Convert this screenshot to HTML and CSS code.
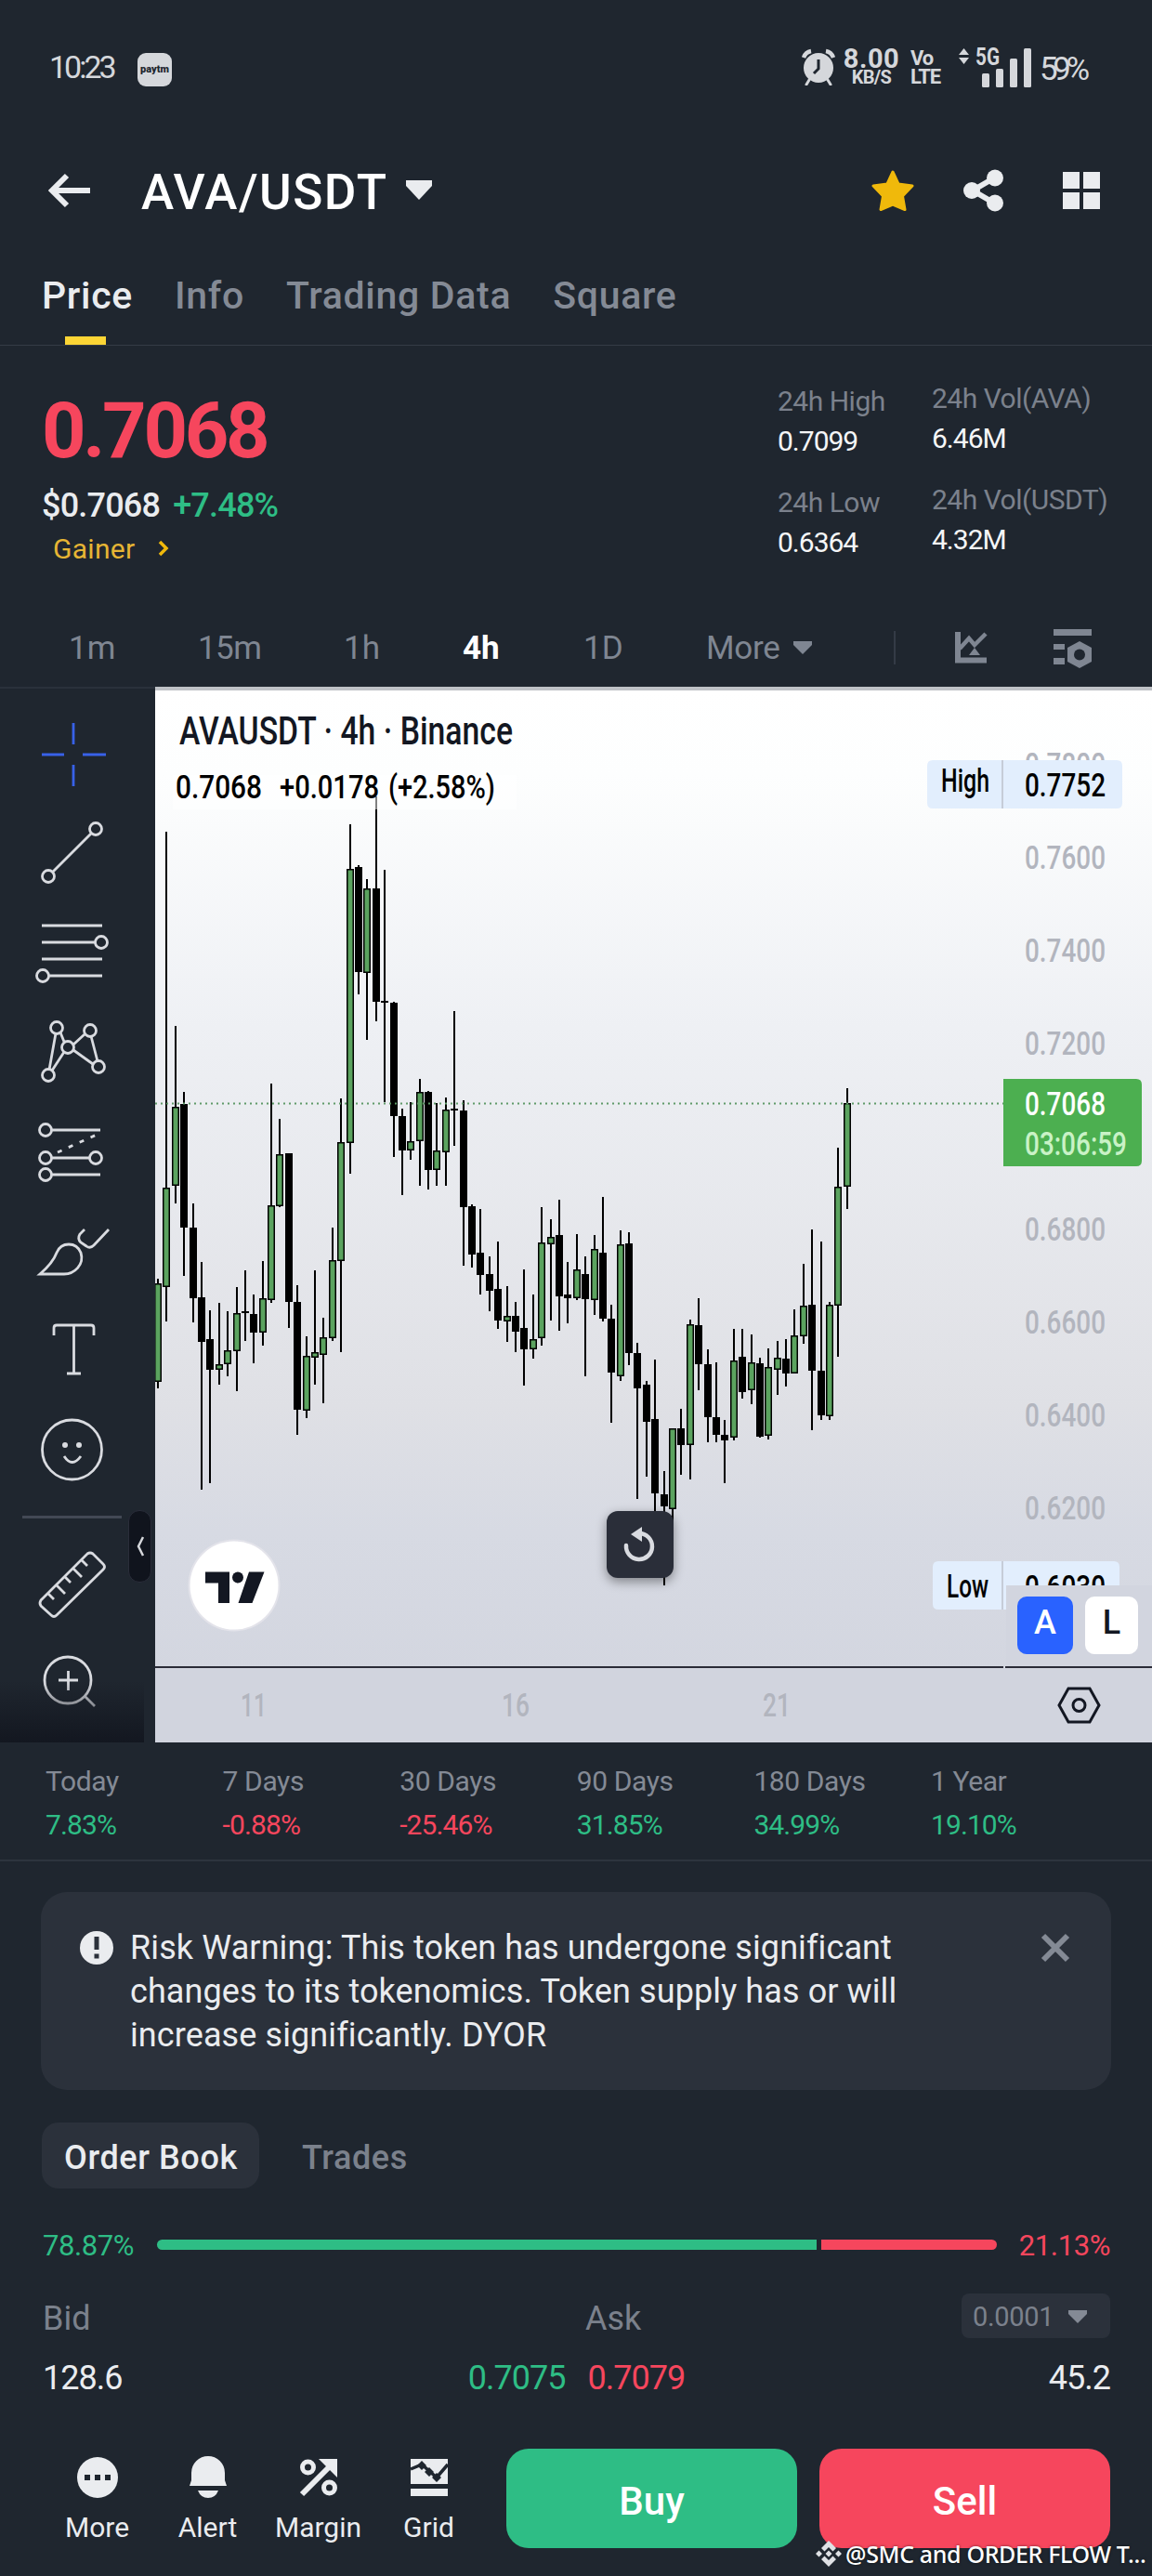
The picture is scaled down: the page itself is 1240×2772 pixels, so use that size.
FILE: index.html
```html
<!DOCTYPE html>
<html lang="en">
<head>
    <meta charset="UTF-8">
    <meta name="viewport" content="width=device-width, initial-scale=1.0">
    <title>AVA/USDT</title>
    <link rel="stylesheet" href="styles.css">
</head>
<body>
    <div class="status">
        <span class="time">10:23</span>
        <span class="app-badge">paytm</span>
        <div class="status-right">
            <svg class="alarm" width="38" height="40" viewBox="0 0 38 40">
                <circle cx="19" cy="21" r="16" fill="#d5d7db"/>
                <path d="M3 10Q5 4 11 3M35 10Q33 4 27 3" stroke="#d5d7db" stroke-width="4.500" fill="none"/>
                <path d="M9 34l-3 5M29 34l3 5" stroke="#d5d7db" stroke-width="3" fill="none" stroke-linecap="round"/>
                <path d="M19 12v10l-5 5" stroke="#1f262f" stroke-width="3" fill="none"/>
            </svg>
            <div class="net speed"><b>8.00</b><span>KB/S</span></div>
            <div class="net volte"><span>Vo</span><span>LTE</span></div>
            <svg class="signal" width="80" height="48" viewBox="0 0 80 48">
                <path d="M1 11 L6.500 4 L12 11ZM1 14 L6.500 21 L12 14Z" fill="#d5d7db"/>
                <g fill="#d5d7db"><rect x="26" y="31" width="8" height="15" rx="1.500"/><rect x="41" y="26" width="8" height="20" rx="1.500"/><rect x="56" y="15" width="8" height="31" rx="1.500"/><rect x="71" y="4" width="8" height="42" rx="1.500"/></g>
                <text x="19" y="22" textLength="26" lengthAdjust="spacingAndGlyphs">5G</text>
            </svg>
            <span class="battery">59%</span>
        </div>
    </div>

    <header>
        <svg class="back" width="46" height="38" viewBox="0 0 46 38"><path d="M45 19H5M20 3L4 19l16 16" stroke="#eaecef" stroke-width="6" fill="none"/></svg>
        <h1>AVA/USDT</h1>
        <svg class="caret" width="28" height="22" viewBox="0 0 28 22"><path d="M0 0H28V6L14 21 0 6Z" fill="#eaecef"/></svg>
        <div class="header-icons">
            <svg width="46" height="46" viewBox="0 0 46 46"><path d="M23 3l6 13 15 2-10.500 11L36 43.500 23 38l-13 5.500L12.500 29 2 18l15-2Z" fill="#f0b90b" stroke="#f0b90b" stroke-width="3" stroke-linejoin="round"/></svg>
            <svg width="46" height="46" viewBox="0 0 46 46"><path d="M36 9L12 23 36 37" stroke="#eaecef" stroke-width="6" fill="none"/><g fill="#eaecef"><circle cx="36" cy="9.500" r="9"/><circle cx="11" cy="23" r="9"/><circle cx="36" cy="36.500" r="9"/></g></svg>
            <svg width="42" height="42" viewBox="0 0 42 42"><path d="M1 1h18v18H1zM23 1h18v18H23zM1 23h18v18H1zM23 23h18v18H23z" fill="#eaecef"/></svg>
        </div>
    </header>

    <nav>
        <a class="active">Price</a>
        <a>Info</a>
        <a>Trading Data</a>
        <a>Square</a>
    </nav>

    <section class="ticker">
        <div class="price-box">
            <div class="price">0.7068</div>
            <div class="usd"><span>$0.7068</span><span class="up">+7.48%</span></div>
            <div class="gainer">Gainer <svg width="12" height="18" viewBox="0 0 12 18"><path d="M2 2l7 7-7 7" stroke="#f0b90b" stroke-width="3.500" fill="none"/></svg></div>
        </div>
        <div class="stats">
            <div class="stat-col">
                <span>24h High</span><b>0.7099</b>
                <span>24h Low</span><b>0.6364</b>
            </div>
            <div class="stat-col raised">
                <span>24h Vol(AVA)</span><b>6.46M</b>
                <span>24h Vol(USDT)</span><b>4.32M</b>
            </div>
        </div>
    </section>

    <div class="intervals">
        <a class="i1">1m</a>
        <a class="i2">15m</a>
        <a class="i3">1h</a>
        <a class="i4 active">4h</a>
        <a class="i5">1D</a>
        <a class="i6">More <svg width="20" height="14" viewBox="0 0 20 14"><path d="M0 0H20V4L10 14 0 4Z" fill="#7f8692"/></svg></a>
        <i class="sep"></i>
        <svg class="ic-chart" width="36" height="36" viewBox="0 0 36 36"><path d="M3 1V31.500H34" stroke="#7f8692" stroke-width="6" fill="none"/><path d="M5 19l10-11 6 7L33 3" stroke="#7f8692" stroke-width="4.500" fill="none"/><path d="M15 26l6-8 6 8Z" fill="#7f8692"/></svg>
        <svg class="ic-set" width="44" height="44" viewBox="0 0 44 44"><g fill="#7f8692"><path d="M1 2h41v7H1zM1 18h12v6H1zM1 33h12v7H1z"/><path d="M29 15l13 7v15l-13 7-13-7V22z"/></g><circle cx="29" cy="29.500" r="6" fill="#1f262f"/></svg>
    </div>

    <section class="chart">
        <div class="tools">
            <svg class="tool cross" viewBox="0 758 167 107"><path d="M45 812H69M89 812H114M79 778V801M79 823V846"/></svg>
            <svg class="tool" viewBox="0 865 167 107"><circle cx="103" cy="892" r="6.500"/><circle cx="52" cy="943" r="6.500"/><path d="M98 897L57 938"/></svg>
            <svg class="tool" viewBox="0 972 167 107"><path d="M45 996H110M45 1014H102M45 1032H110M53 1050H110"/><circle cx="109" cy="1014" r="6.500"/><circle cx="46" cy="1050" r="6.500"/></svg>
            <svg class="tool" viewBox="0 1079 167 107"><path d="M60 1112L53 1151M65 1111L69 1121M79 1124L91 1113M98 1115L105 1142M79 1130L100 1145M69 1132L56 1152"/><circle cx="61" cy="1106" r="6.500"/><circle cx="97" cy="1109" r="6.500"/><circle cx="73" cy="1127" r="6.500"/><circle cx="52" cy="1157" r="6.500"/><circle cx="106" cy="1148" r="6.500"/></svg>
            <svg class="tool" viewBox="0 1186 167 107"><path d="M56 1216H108M56 1246H96M56 1264H108"/><path d="M62 1240L104 1221" stroke-dasharray="5 8"/><circle cx="49" cy="1216" r="6.500"/><circle cx="49" cy="1246" r="6.500"/><circle cx="49" cy="1264" r="6.500"/><circle cx="103" cy="1246" r="6.500"/></svg>
            <svg class="tool" viewBox="0 1293 167 107"><path d="M43 1371C50 1365 58 1356 61 1348C66 1336 82 1336 87 1348C91 1361 80 1371 69 1371ZM91 1323L86 1328Q83 1333 87 1337L93 1341Q97 1344 101 1340L117 1323"/></svg>
            <svg class="tool" viewBox="0 1400 167 107"><path d="M58 1437V1429Q58 1426 61 1426H98Q101 1426 101 1429V1437M79.500 1426V1478M72 1478H87"/></svg>
            <svg class="tool" viewBox="0 1507 167 107"><circle cx="77.500" cy="1560" r="32"/><path d="M69 1567Q77.500 1580 87 1567"/><g class="dots"><circle cx="70" cy="1555" r="3"/><circle cx="85" cy="1555" r="3"/></g></svg>
            <div class="tools-sep"></div>
            <svg class="tool" viewBox="0 1652 167 107"><path d="M44 1722L94 1672Q97 1670 100 1672L111 1683Q114 1686 111 1689L61 1738Q58 1741 55 1738L44 1728Q42 1725 44 1722ZM52 1715L58 1721M61 1706L70 1715M70 1697L76 1703M79 1688L88 1697M88 1679L94 1685"/></svg>
            <svg class="tool" viewBox="0 1759 167 107"><circle cx="73" cy="1808" r="25"/><path d="M63 1808H84M73.500 1798V1819M91 1825L102 1836"/></svg>
            <div class="tools-fade"></div>
            <div class="collapse"><svg width="8" height="22" viewBox="0 0 8 22"><path d="M7 1L2 11l5 10" stroke="#d5d7db" stroke-width="2.500" fill="none"/></svg></div>
        </div>
        <div class="plot">
            <svg id="plot" width="1073" height="1132" viewBox="167 743 1073 1132">
                <g id="candles"></g>
                <path d="M167 1187.500H1080" stroke="#5f9a68" stroke-width="2" stroke-dasharray="2 4"/>
                <rect x="186" y="834" width="370" height="37" fill="#fff" opacity=".5"/>
                <text class="head" x="193" y="801" textLength="359">AVAUSDT · 4h · Binance</text>
                <text class="num" x="189" y="859" textLength="93">0.7068</text>
                <text class="num" x="301" y="859" textLength="107">+0.0178</text>
                <text class="num" x="418" y="859" textLength="115">(+2.58%)</text>
                <g id="scale"></g>
                <path d="M1004 818H1202q6 0 6 6V864q0 6-6 6H1004q-6 0-6-6V824q0-6 6-6Z" fill="#e2eefd"/>
                <path d="M1079 818V870" stroke="#c6ccd8" stroke-width="2"/>
                <text class="num" x="1013" y="852" textLength="52">High</text>
                <text class="num" x="1103" y="857" textLength="87">0.7752</text>
                <path d="M1080 1161H1223q6 0 6 6V1249q0 6-6 6H1080Z" fill="#4caf50"/>
                <text class="num white" x="1103" y="1200" textLength="87">0.7068</text>
                <text class="num pale" x="1103" y="1243" textLength="110">03:06:59</text>
                <path d="M1010 1680H1199q6 0 6 6V1732H1010q-6 0-6-6V1686q0-6 6-6Z" fill="#e2eefd"/>
                <path d="M1079 1680V1732" stroke="#c6ccd8" stroke-width="2"/>
                <text class="num" x="1019" y="1719" textLength="45">Low</text>
                <text class="num" x="1103" y="1720" textLength="87">0.6030</text>
                <rect x="1083" y="1706" width="157" height="88" fill="#d2d5df"/>
                <rect x="167" y="1795" width="1073" height="80" fill="#d1d4de"/>
                <path d="M167 1794H1080M1082 1794H1240" stroke="#2a2b37" stroke-width="2"/>
                <g class="axis"><text x="259" y="1847" textLength="28">11</text><text x="540" y="1847" textLength="30">16</text><text x="821" y="1847" textLength="30">21</text></g>
                <path d="M1150 1817H1173L1183 1835 1173 1853H1150L1140 1835Z" fill="none" stroke="#131722" stroke-width="3"/>
                <circle cx="1161.500" cy="1835" r="6.500" fill="none" stroke="#131722" stroke-width="3"/>
                <circle cx="252" cy="1706" r="49.500" fill="#e3e3ea"/>
                <circle cx="252" cy="1706" r="47.500" fill="#fff"/>
                <path d="M221 1691.500H247V1725H235V1703.500H221ZM268 1691.500H284.500L271.500 1725H256.500Z" fill="#131722"/>
                <circle cx="256" cy="1697.500" r="6" fill="#131722"/>
            </svg>
            <button class="reset"><svg width="36" height="40" viewBox="0 0 36 40"><path d="M3 21A14 14 0 1 0 17 8" stroke="#d9dbe0" stroke-width="4.500" fill="none" stroke-linecap="round"/><path d="M8 9L20 1V17Z" fill="#d9dbe0"/></svg></button>
            <button class="scale-btn auto">A</button>
            <button class="scale-btn log">L</button>
        </div>
    </section>

    <section class="perf">
        <div><span>Today</span><b class="up">7.83%</b></div>
        <div><span>7 Days</span><b class="down">-0.88%</b></div>
        <div><span>30 Days</span><b class="down">-25.46%</b></div>
        <div><span>90 Days</span><b class="up">31.85%</b></div>
        <div><span>180 Days</span><b class="up">34.99%</b></div>
        <div><span>1 Year</span><b class="up">19.10%</b></div>
    </section>

    <section class="warning">
        <svg class="warn-ic" width="38" height="38" viewBox="0 0 38 38"><circle cx="19" cy="19" r="18" fill="#eaecef"/><path d="M19 7V21M19 25.500V30.500" stroke="#2b313b" stroke-width="5"/></svg>
        <p>Risk Warning: This token has undergone significant<br>changes to its tokenomics. Token supply has or will<br>increase significantly. DYOR</p>
        <svg class="close" width="32" height="32" viewBox="0 0 32 32"><path d="M3 3L29 29M29 3L3 29" stroke="#848a95" stroke-width="6"/></svg>
    </section>

    <div class="book-tabs">
        <a class="active">Order Book</a>
        <a>Trades</a>
    </div>

    <div class="ratio">
        <span class="up">78.87%</span>
        <div class="bar"><i class="buy-part"></i><i class="sell-part"></i></div>
        <span class="down">21.13%</span>
    </div>

    <div class="book-head">
        <span>Bid</span>
        <span class="ask">Ask</span>
        <div class="step">0.0001 <svg width="20" height="14" viewBox="0 0 20 14"><path d="M0 0H20V4L10 14 0 4Z" fill="#848a95"/></svg></div>
    </div>
    <div class="book-row">
        <div><span>128.6</span><span class="up">0.7075</span></div>
        <div><span class="down">0.7079</span><span>45.2</span></div>
    </div>

    <footer>
        <a class="act"><svg width="44" height="46" viewBox="0 0 44 46"><circle cx="22" cy="23" r="22" fill="#eaecef"/><path d="M8 20h6v6H8zM19 20h6v6h-6zM30 20h6v6h-6z" fill="#1f262f"/></svg>More</a>
        <a class="act"><svg width="44" height="46" viewBox="0 0 44 46"><path d="M4 26V18a18 18 0 0 1 36 0v8l2 6H2ZM11 37h22q-3 8-11 8t-11-8Z" fill="#eaecef"/></svg>Alert</a>
        <a class="act"><svg width="44" height="46" viewBox="0 0 44 46"><g fill="none" stroke="#eaecef"><circle cx="10.500" cy="12" r="6" stroke-width="5"/><circle cx="33.500" cy="34" r="6" stroke-width="5"/><path d="M4 41L34 11" stroke-width="6"/></g><path d="M22 3H42V23Z" fill="#eaecef"/></svg>Margin</a>
        <a class="act"><svg width="44" height="46" viewBox="0 0 44 46"><path d="M2 3H42V30H2ZM2 35H42V43H2Z" fill="#eaecef"/><path d="M2 14L14 9 30 23 42 9" stroke="#1f262f" stroke-width="3.500" fill="none"/><path d="M14 5l5 5-5 5-5-5ZM22 12l5 5-5 5-5-5ZM30 18l5 5-5 5-5-5Z" fill="#1f262f"/></svg>Grid</a>
        <button class="trade buy">Buy</button>
        <button class="trade sell">Sell</button>
    </footer>
    <div class="credit">
        <svg width="28" height="28" viewBox="0 0 28 28"><g fill="#dfe1e5"><path d="M14 0l8 8-3.500 3.500L14 7l-4.500 4.500L6 8ZM14 28l8-8-3.500-3.500L14 21l-4.500-4.500L6 20ZM14 10.500l3.500 3.500-3.500 3.500-3.500-3.500ZM3.500 10.500L7 14l-3.500 3.500L0 14ZM24.500 10.500L28 14l-3.500 3.500L21 14Z"/></g></svg>
        @SMC and ORDER FLOW T...
    </div>

    <script src="script.js"></script>
</body>
</html>
```
FILE: styles.css
```css
* {
    box-sizing: border-box;
}

body {
    margin: 0;
    width: 1240px;
    height: 2772px;
    overflow: hidden;
    position: relative;
    background: #1f262f;
    color: #eaecef;
    font-family: Roboto, "Noto Sans", sans-serif;
}

svg {
    display: block;
    flex: none;
}

h1, p {
    margin: 0;
}

b {
    font-weight: 400;
}

button {
    border: 0;
    padding: 0;
    font-family: inherit;
}

.up {
    color: #2ebd85;
}

.down {
    color: #f6465d;
}

/* status bar */
.status {
    height: 144px;
    display: flex;
    align-items: center;
    padding-left: 53px;
    color: #d5d7db;
}

.time {
    width: 95px;
    font-size: 34px;
    letter-spacing: -3px;
}

.app-badge {
    width: 37px;
    height: 36px;
    margin-top: 5px;
    border-radius: 9px;
    background: #d5d7db;
    color: #1f262f;
    font-size: 11px;
    font-weight: 900;
    line-height: 36px;
    text-align: center;
}

.status-right {
    display: flex;
    align-items: center;
    margin-left: auto;
    padding-right: 68px;
}

.net {
    display: flex;
    flex-direction: column;
    font-weight: 700;
    line-height: 20px;
}

.speed {
    width: 60px;
    margin: 2px 0 0 8px;
    font-size: 20px;
    align-items: center;
    letter-spacing: -0.7px;
}

.speed b {
    font-size: 29px;
    font-weight: 700;
    letter-spacing: 0.5px;
}

.volte {
    width: 34px;
    margin: 2px 17px 0 12px;
    font-size: 22px;
    letter-spacing: -1.2px;
}

.signal text {
    font-size: 25px;
    font-weight: 700;
    fill: #d5d7db;
}

.battery {
    width: 53px;
    margin: 5px 0 0 8px;
    font-size: 35px;
    letter-spacing: -5.4px;
}

/* pair header */
header {
    height: 122px;
    display: flex;
    align-items: center;
    padding: 0 55px 0 52px;
}

h1 {
    width: 285px;
    margin-left: 54px;
    padding-top: 4px;
    font-size: 53px;
    font-weight: 500;
    letter-spacing: 1.5px;
    color: #fff;
    white-space: nowrap;
}

.header-icons {
    display: flex;
    align-items: center;
    margin-left: auto;
}

.header-icons svg:nth-child(2) {
    margin: 0 62px 0 51px;
}

nav {
    height: 106px;
    display: flex;
    gap: 45px;
    padding-left: 45px;
    border-bottom: 1px solid #343b46;
}

nav a {
    position: relative;
    font-size: 41px;
    font-weight: 500;
    letter-spacing: 0.7px;
    line-height: 105px;
    color: #848a95;
}

nav a.active {
    color: #eaecef;
}

nav a.active::after {
    content: "";
    position: absolute;
    left: 25px;
    bottom: 0;
    width: 44px;
    height: 9px;
    background: #fcd535;
}

/* price and 24h stats */
.ticker {
    height: 283px;
    display: flex;
    justify-content: space-between;
    padding: 35px 45px 0 45px;
}

.price {
    height: 112px;
    line-height: 114px;
    font-size: 83px;
    font-weight: 700;
    letter-spacing: -3.3px;
    color: #f6465d;
}

.usd {
    display: flex;
    gap: 14px;
    height: 50px;
    line-height: 50px;
    font-size: 36px;
    font-weight: 500;
    letter-spacing: -0.8px;
}

.gainer {
    display: flex;
    align-items: center;
    gap: 24px;
    height: 42px;
    padding-left: 12px;
    font-size: 30px;
    letter-spacing: 0.3px;
    color: #e6b534;
}

.stats {
    display: flex;
    gap: 50px;
}

.stat-col {
    width: 116px;
    display: flex;
    flex-direction: column;
    padding-top: 3px;
    font-size: 30px;
    line-height: 44px;
    white-space: nowrap;
}

.stat-col.raised {
    width: 192px;
    padding-top: 0;
}

.stat-col span {
    letter-spacing: -0.5px;
    color: #7b818c;
}

.stat-col b {
    margin-top: -1px;
    margin-bottom: 22px;
    letter-spacing: -1px;
    color: #f5f6f7;
}

/* intervals */
.intervals {
    height: 84px;
    display: flex;
    align-items: center;
    font-size: 35px;
    color: #7f8692;
}

.intervals .active {
    font-weight: 700;
    color: #fff;
}

.i1 { margin-left: 74px; width: 139px; }
.i2 { width: 157px; letter-spacing: -0.6px; }
.i3 { width: 128px; }
.i4 { width: 130px; }
.i5 { width: 132px; }

.i6 {
    display: flex;
    align-items: center;
    gap: 15px;
    width: 202px;
    letter-spacing: -0.3px;
}

.sep {
    width: 2px;
    height: 36px;
    background: #343b46;
}

.ic-chart {
    margin-left: 64px;
}

.ic-set {
    margin-left: 69px;
}

/* chart */
.chart {
    height: 1136px;
    display: flex;
}

.tools {
    position: relative;
    width: 167px;
    padding-top: 17px;
    border-top: 2px solid #2a313b;
}

.tool {
    width: 167px;
    height: 107px;
    fill: none;
    stroke: #d9dbe0;
    stroke-width: 2.8;
}

.tool.cross {
    stroke: #3861e8;
}

.tool .dots {
    fill: #d9dbe0;
    stroke: none;
}

.tools-sep {
    width: 107px;
    height: 3px;
    margin: 17px 0 18px 24px;
    background: #434955;
}

.tools-fade {
    position: absolute;
    left: 0;
    bottom: 0;
    width: 155px;
    height: 66px;
    background: linear-gradient(rgba(19, 23, 32, 0), #131720);
}

.collapse {
    position: absolute;
    left: 138px;
    top: 884px;
    width: 25px;
    height: 78px;
    border: 1px solid #2a2d3a;
    border-radius: 12px;
    background: #10141d;
    display: flex;
    align-items: center;
    justify-content: center;
}

.plot {
    position: relative;
    width: 1073px;
    border-top: 4px solid #bfc2c7;
    background: linear-gradient(#fff 0%, #fdfefe 8%, #eef0f4 32%, #dfe0e5 68%, #d7dae3 80%, #d1d4de 100%);
}

.plot text {
    font-size: 35px;
    fill: #000;
    font-weight: 500;
}

.plot .head {
    font-size: 43px;
    fill: #131722;
}

.plot text.white {
    fill: #fff;
}

.plot text.pale {
    fill: #c9f2c6;
}

.plot .axis text {
    fill: #b2b5be;
}

.reset {
    position: absolute;
    left: 486px;
    top: 883px;
    width: 72px;
    height: 72px;
    border-radius: 12px;
    background: #2a2e39;
    box-shadow: 0 4px 12px rgba(0, 0, 0, 0.4);
    display: flex;
    align-items: center;
    justify-content: center;
}

.scale-btn {
    position: absolute;
    top: 975px;
    width: 60px;
    height: 62px;
    padding-bottom: 6px;
    border-radius: 10px;
    font-size: 36px;
    font-weight: 500;
}

.scale-btn.auto {
    left: 928px;
    background: #2962ff;
    color: #fff;
}

.scale-btn.log {
    left: 1001px;
    width: 57px;
    background: #fff;
    color: #131722;
}

/* performance */
.perf {
    height: 128px;
    display: grid;
    grid-template-columns: repeat(6, 190.6px);
    padding: 18px 0 0 49px;
    border-bottom: 2px solid #2d343e;
    font-size: 30px;
}

.perf div {
    display: flex;
    flex-direction: column;
    line-height: 47px;
    letter-spacing: -0.4px;
}

.perf span {
    color: #848a95;
}

.perf b {
    letter-spacing: -0.9px;
}

.warning {
    display: flex;
    width: 1152px;
    height: 213px;
    margin: 33px 0 0 44px;
    padding: 37px 44px 0 41px;
    border-radius: 28px;
    background: #2b313b;
}

.warn-ic {
    margin: 4px 17px 0 0;
}

.warning p {
    font-size: 36px;
    line-height: 47px;
    letter-spacing: 0.1px;
    white-space: nowrap;
}

.close {
    margin: 7px 0 0 auto;
}

/* order book */
.book-tabs {
    display: flex;
    height: 71px;
    margin: 35px 0 0 45px;
    line-height: 76px;
    font-size: 36px;
    font-weight: 500;
    color: #7b818c;
}

.book-tabs a {
    padding: 0 24px;
    margin-right: 22px;
    letter-spacing: 0.6px;
}

.book-tabs .active {
    width: 234px;
    border-radius: 18px;
    background: #2b313b;
    color: #eaecef;
    white-space: nowrap;
}

.ratio {
    display: flex;
    align-items: center;
    justify-content: space-between;
    height: 48px;
    margin: 37px 45px 0 46px;
    font-size: 31px;
    letter-spacing: -0.4px;
}

.bar {
    display: flex;
    gap: 5px;
    width: 904px;
    height: 11px;
    margin-top: -2px;
}

.buy-part {
    width: 710px;
    border-radius: 6px 0 0 6px;
    background: #2ebd85;
}

.sell-part {
    flex: 1;
    border-radius: 0 6px 6px 0;
    background: #f6465d;
}

.book-head {
    display: flex;
    align-items: center;
    height: 48px;
    margin: 28px 45px 0 46px;
    font-size: 36px;
    color: #7b818c;
}

.book-head span {
    width: 584px;
    padding-top: 5px;
}

.book-head .ask {
    width: 405px;
}

.step {
    display: flex;
    flex: 1;
    align-items: center;
    gap: 16px;
    height: 48px;
    padding-left: 12px;
    padding-top: 2px;
    border-radius: 8px;
    background: #2b313b;
    font-size: 29px;
    letter-spacing: -0.3px;
}

.book-row {
    display: flex;
    gap: 24px;
    margin: 17px 45px 0 46px;
    font-size: 36px;
    line-height: 52px;
    letter-spacing: -1px;
}

.book-row div {
    display: flex;
    justify-content: space-between;
    flex: 1;
}

/* bottom bar */
footer {
    display: flex;
    margin: 50px 0 0 45px;
    font-size: 30px;
}

.act {
    width: 119px;
    display: flex;
    flex-direction: column;
    align-items: center;
    gap: 13px;
    padding-top: 8px;
}

.trade {
    width: 313px;
    height: 107px;
    margin-left: 24px;
    padding-top: 5px;
    border-radius: 24px;
    font-size: 42px;
    font-weight: 500;
    color: #fff;
}

.buy {
    background: #2ebd85;
}

.sell {
    background: #f6465d;
}

.credit {
    position: absolute;
    left: 878px;
    top: 2731px;
    display: flex;
    align-items: center;
    gap: 4px;
    height: 34px;
    font-family: "Noto Sans", sans-serif;
    font-size: 25px;
    font-weight: 500;
    letter-spacing: -0.35px;
    color: #fff;
    white-space: nowrap;
    text-shadow: 0 0 3px rgba(0, 0, 0, 0.6);
}
```
FILE: script.js
```js
// one row per candle: high, body top, body bottom, low, 1 = rising
const candles = [
    [1376, 1381, 1487, 1494, 1], [895, 1278, 1385, 1422, 1], [1104, 1191, 1276, 1295, 1], [1175, 1188, 1321, 1373, 0],
    [1295, 1321, 1397, 1423, 0], [1358, 1396, 1444, 1603, 0], [1410, 1441, 1474, 1596, 0], [1402, 1468, 1474, 1490, 1],
    [1411, 1453, 1468, 1481, 1], [1385, 1413, 1454, 1497, 1], [1367, 1411, 1413, 1443, 0], [1393, 1414, 1434, 1467, 0],
    [1357, 1397, 1434, 1448, 1], [1166, 1297, 1399, 1402, 1], [1204, 1242, 1298, 1299, 1], [1241, 1241, 1401, 1429, 0],
    [1383, 1401, 1517, 1544, 0], [1438, 1459, 1518, 1526, 1], [1367, 1455, 1461, 1490, 1], [1418, 1439, 1458, 1510, 1],
    [1321, 1356, 1440, 1443, 1], [1182, 1229, 1357, 1455, 1], [887, 935, 1230, 1263, 1], [931, 933, 1046, 1070, 0],
    [946, 956, 1047, 1119, 1], [857, 956, 1078, 1099, 0], [936, 1077, 1079, 1186, 0], [1078, 1079, 1201, 1245, 0],
    [1193, 1201, 1238, 1286, 0], [1186, 1228, 1238, 1248, 1], [1161, 1175, 1228, 1276, 1], [1174, 1175, 1259, 1280, 0],
    [1187, 1238, 1259, 1276, 1], [1181, 1194, 1240, 1276, 1], [1088, 1193, 1195, 1233, 0], [1184, 1195, 1299, 1362, 0],
    [1296, 1298, 1350, 1364, 0], [1301, 1348, 1372, 1393, 0], [1352, 1371, 1389, 1411, 0], [1336, 1387, 1421, 1430, 0],
    [1384, 1416, 1422, 1444, 1], [1401, 1416, 1433, 1455, 0], [1366, 1429, 1452, 1491, 0], [1393, 1441, 1452, 1462, 1],
    [1299, 1337, 1440, 1448, 1], [1312, 1331, 1339, 1421, 1], [1291, 1329, 1395, 1432, 0], [1358, 1393, 1397, 1424, 0],
    [1328, 1366, 1397, 1399, 1], [1352, 1371, 1398, 1481, 0], [1329, 1344, 1399, 1415, 1], [1288, 1348, 1419, 1422, 0],
    [1404, 1419, 1477, 1531, 0], [1324, 1339, 1481, 1486, 1], [1326, 1338, 1456, 1469, 0], [1445, 1456, 1494, 1613, 0],
    [1486, 1490, 1530, 1589, 0], [1463, 1527, 1607, 1640, 0], [1583, 1608, 1621, 1706, 0], [1537, 1537, 1624, 1650, 1],
    [1516, 1537, 1555, 1587, 0], [1420, 1425, 1555, 1592, 1], [1397, 1426, 1468, 1496, 0], [1452, 1468, 1525, 1552, 0],
    [1466, 1525, 1544, 1552, 0], [1528, 1544, 1550, 1596, 0], [1430, 1464, 1547, 1550, 1], [1430, 1460, 1498, 1505, 0],
    [1436, 1466, 1496, 1511, 1], [1461, 1467, 1546, 1547, 0], [1451, 1471, 1545, 1549, 1], [1443, 1461, 1474, 1501, 1],
    [1441, 1462, 1478, 1492, 0], [1409, 1437, 1478, 1478, 1], [1360, 1405, 1438, 1446, 1], [1323, 1404, 1475, 1539, 0],
    [1336, 1475, 1523, 1528, 0], [1401, 1404, 1524, 1528, 1], [1235, 1277, 1405, 1460, 1], [1171, 1187, 1277, 1301, 1]
];

let out = "";
candles.forEach((c, i) => {
    const x = Math.round(170 + i * 9.39);
    out += `<rect x="${x - 1}" y="${c[0]}" width="2" height="${c[3] - c[0]}"/>`;
    out += `<rect x="${x - 4}" y="${c[1]}" width="8" height="${c[2] - c[1]}"/>`;
    if (c[4]) {
        out += `<rect x="${x - 2.5}" y="${c[1] + 1.5}" width="5" height="${Math.max(c[2] - c[1] - 3, 1)}" fill="#5ba35f"/>`;
    }
});
document.getElementById("candles").innerHTML = out;

// price scale
let labels = "";
for (let i = 0; i < 9; i++) {
    if (i === 4) continue; // current price tag sits here
    const price = (0.78 - i * 0.02).toFixed(4);
    labels += `<text x="1103" y="${834.5 + i * 100.1}" textLength="87">${price}</text>`;
}
const scale = document.getElementById("scale");
scale.setAttribute("class", "axis");
scale.innerHTML = labels;

// squeeze the glyphs as well as the gaps
document.querySelectorAll("#plot text[textLength]").forEach(t => t.setAttribute("lengthAdjust", "spacingAndGlyphs"));
```
